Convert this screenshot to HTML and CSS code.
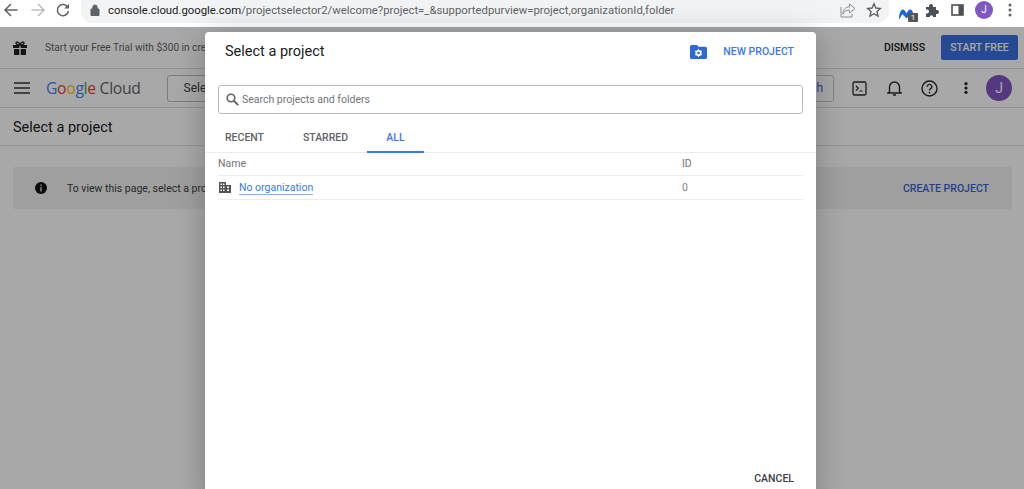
FILE: index.html
```html
<!DOCTYPE html>
<html lang="en">
<head>
<meta charset="utf-8">
<title>Select a project</title>
<link rel="stylesheet" href="styles.css">
</head>
<body>
<header class="chrome">
  <svg class="ci back" width="18" height="18" viewBox="0 0 18 18"><path d="M15.500 9H3M9 3 3 9l6 6" fill="none" stroke="#5f6368" stroke-width="1.500"/></svg>
  <svg class="ci fwd" width="18" height="18" viewBox="0 0 18 18"><path d="M2.500 9H15M9 3l6 6-6 6" fill="none" stroke="#bcbec1" stroke-width="1.500"/></svg>
  <svg class="ci reload" width="18" height="18" viewBox="0 0 18 18"><path d="M13.800 6.200A5.600 5.600 0 1 0 14.500 10" fill="none" stroke="#5f6368" stroke-width="1.500"/><path d="M15 2.800v4.800h-4.800z" fill="#5f6368"/></svg>
  <div class="omnibox">
    <svg class="lock" width="10" height="12" viewBox="0 0 10 12"><path d="M1 5h8v6.500H1zM2.800 5V3.200a2.200 2.200 0 0 1 4.400 0V5" fill="#5f6368" stroke="#5f6368"/></svg>
    <span class="url"><b>console.cloud.google.com</b>/projectselector2/welcome?project=_&amp;supportedpurview=project,organizationId,folder</span>
    <span class="spacer"></span>
    <svg class="share" width="16" height="16" viewBox="0 0 16 16"><path d="M9.500 2 15 6.500 9.500 11V8.200C6 8.200 4 9.500 2.800 12c.2-4 2.500-6.800 6.700-7.200zM1 5v10h11v-3" fill="none" stroke="#8a8d91" stroke-width="1"/></svg>
    <svg class="star" width="16" height="16" viewBox="0 0 16 16"><path d="m8 1.800 1.900 4.200 4.500.5-3.400 3 1 4.500L8 11.700 4 14l1-4.500-3.400-3 4.500-.5z" fill="none" stroke="#5f6368" stroke-width="1.400"/></svg>
  </div>
  <div class="ext">
    <svg width="15" height="11" viewBox="0 0 15 11"><path d="M0 10.500C0 5 1.500 1 3.500.5c1.500-.3 3 1.500 4 4 1-2.500 2.500-4.300 4-4 2 .5 3.500 4.500 3.500 10-1.500-2-2.500-4.500-3.500-5.500-1 1-2.500 3-4 4.500C6 8 4.500 6 3.500 5 2.500 6 1.500 8.500 0 10.500z" fill="#1565d8"/></svg>
    <span class="ext-badge">1</span>
  </div>
  <svg class="puzzle" width="14" height="14" viewBox="0 0 14 14"><path d="M1 4h3V3a2 2 0 0 1 4 0v1h3v3h1a2 2 0 0 1 0 4h-1v3H8v-1a2 2 0 0 0-3 0v1H1v-3.500h1a2 2 0 0 0 0-4H1z" fill="#4d5156"/></svg>
  <svg class="panel" width="13" height="12" viewBox="0 0 13 12"><rect x="1" y="1" width="11" height="10" fill="none" stroke="#4d5156" stroke-width="1.600"/><rect x="7.500" y="1" width="4.500" height="10" fill="#4d5156"/></svg>
  <span class="chrome-avatar">J</span>
  <svg class="cdots" width="4" height="14" viewBox="0 0 4 14"><circle cx="2" cy="2" r="1.500" fill="#5f6368"/><circle cx="2" cy="7" r="1.500" fill="#5f6368"/><circle cx="2" cy="12" r="1.500" fill="#5f6368"/></svg>
</header>

<main class="console">
  <div class="trial">
    <svg class="gift" width="16" height="16" viewBox="0 0 16 16"><path d="M1 5h6.300v3H1zM8.700 5H15v3H8.700zM2 9h5.300v6H2zM8.700 9H14v6H8.700z" fill="#222"/><path d="M8 5C6 5 4 4.500 4 3s3-1.500 4 2c1-3.500 4-3.500 4-2s-2 2-4 2z" fill="none" stroke="#222" stroke-width="1.300"/></svg>
    <span class="trial-text">Start your Free Trial with $300 in credit</span>
    <span class="spacer"></span>
    <span class="dismiss">DISMISS</span>
    <span class="start">START FREE</span>
  </div>
  <div class="topbar">
    <svg class="menu" width="16" height="12" viewBox="0 0 16 12"><path d="M0 1h16M0 6h16M0 11h16" stroke="#333" stroke-width="1.400"/></svg>
    <span class="logo"><span class="g-b">G</span><span class="g-r">o</span><span class="g-y">o</span><span class="g-b">g</span><span class="g-g">l</span><span class="g-r">e</span> <span class="g-cloud">Cloud</span></span>
    <span class="picker">Select a project</span>
    <span class="spacer"></span>
    <span class="search-btn">Search</span>
    <svg class="t1" width="15" height="15" viewBox="0 0 15 15"><rect x="1" y="1" width="13" height="13" rx="1.500" fill="none" stroke="#2b2b2b" stroke-width="1.300"/><path d="m4 5 2.300 2.300L4 9.600M7.500 10h3" fill="none" stroke="#2b2b2b" stroke-width="1.200"/></svg>
    <svg class="t2" width="15" height="18" viewBox="0 0 15 18"><path d="M2.500 13V8a5 5 0 0 1 10 0v5l1.500 1H1zM6 16h3" fill="none" stroke="#2b2b2b" stroke-width="1.400"/></svg>
    <svg class="t3" width="17" height="17" viewBox="0 0 17 17"><circle cx="8.500" cy="8.500" r="7.500" fill="none" stroke="#2b2b2b" stroke-width="1.400"/><path d="M6.200 6.700a2.300 2.300 0 1 1 3.500 2c-.8.500-1.200 1-1.200 1.800" fill="none" stroke="#2b2b2b" stroke-width="1.400"/><circle cx="8.500" cy="12.600" r=".9" fill="#2b2b2b"/></svg>
    <svg class="t4" width="4" height="12" viewBox="0 0 4 12"><circle cx="2" cy="1.700" r="1.600" fill="#222"/><circle cx="2" cy="6" r="1.600" fill="#222"/><circle cx="2" cy="10.300" r="1.600" fill="#222"/></svg>
    <span class="avatar">J</span>
  </div>
  <div class="title-bar">Select a project</div>
  <div class="notice">
    <svg class="info" width="12" height="12" viewBox="0 0 12 12"><circle cx="6" cy="6" r="6" fill="#111"/><path d="M5.100 5h1.800v4.500H5.100zM5.100 2.400h1.800v1.600H5.100z" fill="#aaa"/></svg>
    <span class="notice-text">To view this page, select a project.</span>
    <span class="spacer"></span>
    <span class="create">CREATE PROJECT</span>
  </div>
</main>

<div class="scrim"></div>

<section class="dialog">
  <div class="dialog-head">
    <h1>Select a project</h1>
    <span class="spacer"></span>
    <svg width="17" height="14" viewBox="0 0 17 14"><path d="M1.500 0H7l1.500 1.800h7A1.500 1.500 0 0 1 17 3.300v9.200a1.500 1.500 0 0 1-1.500 1.500h-14A1.500 1.500 0 0 1 0 12.500v-11A1.500 1.500 0 0 1 1.500 0z" fill="#2d6ad6"/><circle cx="8.500" cy="8" r="2.200" fill="#2d6ad6" stroke="#fff" stroke-width="1.800"/><path d="M8.500 4v8M5 6l7 4M12 6l-7 4" stroke="#fff" stroke-width="1"/><circle cx="8.500" cy="8" r="1.300" fill="#2d6ad6"/></svg>
    <span class="new">NEW PROJECT</span>
  </div>
  <div class="searchbox">
    <svg width="13" height="13" viewBox="0 0 13 13"><circle cx="5" cy="5" r="3.800" fill="none" stroke="#5f6368" stroke-width="1.600"/><path d="m8 8 4.200 4.200" stroke="#5f6368" stroke-width="1.800"/></svg>
    <span>Search projects and folders</span>
  </div>
  <nav class="tabs">
    <span class="tab recent">RECENT</span>
    <span class="tab starred">STARRED</span>
    <span class="tab all">ALL</span>
  </nav>
  <div class="table">
    <div class="row head"><span class="c-name">Name</span><span class="c-id">ID</span></div>
    <div class="row">
      <span class="c-name org">
        <svg width="12" height="11" viewBox="0 0 12 11"><path d="M0 0h7v3h5v8H0z" fill="#555"/><path d="M1.500 1.500h1.500V3H1.500zM4 1.500h1.500V3H4zM1.500 4.500h1.500V6H1.500zM4 4.500h1.500V6H4zM1.500 7.500h1.500V9H1.500zM4 7.500h1.500V9H4zM8 4.500h2V6H8zM8 7.500h2V9H8z" fill="#fff"/></svg>
        <a class="org-link">No organization</a>
      </span>
      <span class="c-id zero">0</span>
    </div>
  </div>
  <div class="spacer-v"></div>
  <div class="dialog-foot"><span class="cancel">CANCEL</span></div>
</section>
</body>
</html>
```
FILE: styles.css
```css
* { box-sizing: border-box; }
html, body { margin: 0; height: 100%; overflow: hidden; }
body { width: 1024px; height: 489px; position: relative; background: #fff; font-family: Roboto, "Liberation Sans", sans-serif; color: #202124; }
.spacer { flex: 1; }

.chrome { height: 27px; background: #fff; display: flex; align-items: flex-start; position: relative; }
.ci { flex: none; margin-top: 1px; }
.back { margin-left: 2px; }
.fwd { margin-left: 9px; }
.reload { margin-left: 7px; }
.omnibox { flex: none; margin-left: 9px; width: 808px; height: 23px; background: #f1f3f4; border-radius: 0 0 12px 12px; display: flex; align-items: center; padding: 0 7px 3px 9px; }
.lock { flex: none; }
.url { margin-left: 8px; font-size: 11.33px; color: #5f6368; white-space: nowrap; }
.url b { font-weight: 400; color: #202124; }
.share { flex: none; margin-right: 10px; }
.star { flex: none; }
.ext { position: relative; flex: none; margin-left: 10px; margin-top: 5px; width: 20px; height: 18px; }
.ext-badge { position: absolute; left: 9px; top: 8px; width: 10px; height: 9px; background: #555; color: #fff; font-size: 8px; line-height: 9px; text-align: center; border-radius: 1px; }
.puzzle { flex: none; margin-left: 6px; margin-top: 3px; }
.panel { flex: none; margin-left: 12px; margin-top: 4px; }
.chrome-avatar { flex: none; margin-left: 11px; margin-top: 1px; width: 18px; height: 18px; border-radius: 50%; background: #7e57c2; color: #fff; font-size: 10px; line-height: 18px; text-align: center; }
.cdots { flex: none; margin-left: 15px; margin-top: 3px; }

.console { height: 462px; background: #fff; }
.trial { height: 42px; padding: 0 6px 0 12px; display: flex; align-items: center; border-bottom: 1px solid #e0e0e0; }
.gift { flex: none; }
.trial-text { margin-left: 17px; color: #5f6368; font-size: 10.1px; }
.dismiss { color: #202124; font-size: 10.5px; font-weight: 500; }
.start { margin-left: 16px; width: 77px; height: 25px; background: #3b6fe0; color: #fff; border-radius: 2px; font-size: 10.5px; font-weight: 500; line-height: 25px; text-align: center; }
.topbar { height: 39px; padding: 0 12px 0 14px; display: flex; align-items: center; border-bottom: 1px solid #e0e0e0; }
.menu { flex: none; }
.logo { margin-left: 16px; font-size: 15.7px; font-family: "Open Sans", sans-serif; letter-spacing: -.3px; }
.g-b { color: #4285f4; } .g-r { color: #ea4335; } .g-y { color: #fbbc05; } .g-g { color: #34a853; } .g-cloud { color: #5f6368; }
.picker { margin-left: 26px; width: 220px; height: 27px; padding-left: 16px; border: 1px solid #bbb; border-radius: 3px; font-size: 12px; line-height: 25px; color: #3c4043; }
.search-btn { width: 60px; height: 27px; border: 1px solid #ccc; border-radius: 3px; font-size: 12px; line-height: 25px; color: #3367d6; text-align: right; padding-right: 10px; }
.t1 { flex: none; margin-left: 18px; }
.t2 { flex: none; margin-left: 20px; }
.t3 { flex: none; margin-left: 19px; }
.t4 { flex: none; margin-left: 26px; }
.avatar { flex: none; margin-left: 18px; width: 26px; height: 26px; border-radius: 50%; background: #7e57c2; color: #fff; font-size: 14px; line-height: 26px; text-align: center; }
.title-bar { height: 38px; padding-left: 13px; font-size: 14.5px; line-height: 40px; border-bottom: 1px solid #e0e0e0; color: #202124; }
.notice { margin: 21px 13px 0; width: 999px; height: 42px; background: #f1f1f1; border-radius: 2px; display: flex; align-items: center; padding: 0 23px 0 22px; }
.info { flex: none; }
.notice-text { margin-left: 20px; font-size: 10.5px; color: #3c4043; }
.create { font-size: 10.5px; font-weight: 500; color: #3367d6; }

.scrim { position: absolute; left: 0; right: 0; top: 27px; bottom: 0; background: rgba(0,0,0,.34); }

.dialog { position: absolute; left: 205px; top: 32px; width: 611px; height: 470px; background: #fff; border-radius: 4px; box-shadow: 0 4px 30px rgba(0,0,0,.25); display: flex; flex-direction: column; }
.dialog-head { height: 39px; padding: 0 22px 0 20px; display: flex; align-items: center; flex: none; }
.dialog-head h1 { margin: 0; font-size: 14.5px; font-weight: 400; color: #202124; }
.new { margin-left: 16px; color: #3b78e7; font-size: 10.5px; font-weight: 500; }
.searchbox { flex: none; margin: 14px 13px 0; height: 29px; border: 1px solid #b9bbbe; border-radius: 3px; display: flex; align-items: center; padding-left: 7px; font-size: 10.5px; color: #6f7377; gap: 3px; }
.tabs { flex: none; height: 39px; display: flex; align-items: stretch; border-bottom: 1px solid #ececec; font-size: 10.5px; font-weight: 500; color: #5f6368; }
.tab { display: flex; align-items: center; justify-content: center; padding-top: 9px; }
.recent { margin-left: 20px; width: 39px; }
.starred { margin-left: 39px; width: 45px; }
.all { margin-left: 19px; width: 57px; color: #3b78e7; border-bottom: 2px solid #3b78e7; margin-bottom: -1px; }
.row { height: 24px; margin: 0 13px; display: flex; align-items: center; border-bottom: 1px solid #ececec; font-size: 10.5px; color: #80868b; }
.row.head { height: 23px; padding-bottom: 2px; color: #70757a; }
.c-name { width: 464px; }
.org { display: flex; align-items: center; gap: 8px; padding-left: 1px; }
.org-link { color: #3b78e7; font-size: 10.5px; border-bottom: 1px solid #8ab0f0; }
.spacer-v { flex: 1; }
.dialog-foot { flex: none; height: 42px; padding: 0 22px 0 0; display: flex; justify-content: flex-end; align-items: flex-start; }
.cancel { font-size: 10.5px; font-weight: 500; color: #3c4043; margin-top: 12px; }
```
